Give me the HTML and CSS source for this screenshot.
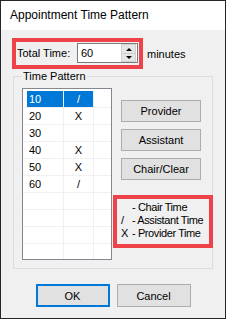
FILE: index.html
```html
<!DOCTYPE html>
<html>
<head>
<meta charset="utf-8">
<link rel="stylesheet" href="styles.css">
</head>
<body>
<div class="window">
  <div class="titlebar">Appointment Time Pattern</div>
  <div class="client">
    <div class="total-row">
      <div class="hl total">
        <span class="total-label">Total Time:</span>
        <div class="spin">
          <span class="spin-val">60</span>
          <div class="spin-btns">
            <div class="spin-up"><i class="arr-up"></i></div>
            <div class="spin-down"><i class="arr-down"></i></div>
          </div>
        </div>
      </div>
      <span class="unit">minutes</span>
    </div>
    <fieldset class="group">
      <legend>Time Pattern</legend>
      <div class="group-body">
        <div class="listview">
          <div class="row sel"><div class="cell c1"><span>10</span></div><div class="cell c2">/</div><div class="cell c3"></div></div>
          <div class="row"><div class="cell c1"><span>20</span></div><div class="cell c2">X</div><div class="cell c3"></div></div>
          <div class="row"><div class="cell c1"><span>30</span></div><div class="cell c2"></div><div class="cell c3"></div></div>
          <div class="row"><div class="cell c1"><span>40</span></div><div class="cell c2">X</div><div class="cell c3"></div></div>
          <div class="row"><div class="cell c1"><span>50</span></div><div class="cell c2">X</div><div class="cell c3"></div></div>
          <div class="row"><div class="cell c1"><span>60</span></div><div class="cell c2">/</div><div class="cell c3"></div></div>
          <div class="row"><div class="cell c1"><span></span></div><div class="cell c2"></div><div class="cell c3"></div></div>
          <div class="row"><div class="cell c1"><span></span></div><div class="cell c2"></div><div class="cell c3"></div></div>
          <div class="row"><div class="cell c1"><span></span></div><div class="cell c2"></div><div class="cell c3"></div></div>
          <div class="row"><div class="cell c1"><span></span></div><div class="cell c2"></div><div class="cell c3"></div></div>
        </div>
        <div class="side">
          <button class="btn">Provider</button>
          <button class="btn">Assistant</button>
          <button class="btn">Chair/Clear</button>
          <div class="hl legend-box">
            <div class="lg-line"><span class="sym"></span><span>- Chair Time</span></div>
            <div class="lg-line"><span class="sym">/</span><span>- Assistant Time</span></div>
            <div class="lg-line"><span class="sym">X</span><span>- Provider Time</span></div>
          </div>
        </div>
      </div>
    </fieldset>
    <div class="actions">
      <button class="dbtn default">OK</button>
      <button class="dbtn">Cancel</button>
    </div>
  </div>
</div>
</body>
</html>
```
FILE: styles.css
```css
body {
  margin: 0;
}
.window {
  width: 226px;
  height: 319px;
  box-sizing: border-box;
  border: 1px solid #262626;
  background: #f0f0f0;
  font-family: "Liberation Sans", Arial, sans-serif;
  font-size: 11px;
  color: #000;
  display: flex;
  flex-direction: column;
  overflow: hidden;
}
.titlebar {
  flex: none;
  height: 29px;
  background: #fff;
  font-size: 12px;
  line-height: 29px;
  padding-left: 9px;
}
.client {
  padding-top: 8px;
}
.total-row {
  display: flex;
  align-items: center;
  height: 31px;
  margin-left: 11px;
}
.hl {
  border: 4px solid #f04349;
  box-sizing: border-box;
}
.total {
  display: flex;
  align-items: flex-start;
  width: 131px;
  height: 31px;
  padding: 1px 0 0 1px;
}
.total-label {
  width: 60px;
  line-height: 20px;
}
.spin {
  width: 61px;
  height: 20px;
  box-sizing: border-box;
  border: 1px solid #7a7a7a;
  background: #fff;
  display: flex;
}
.spin-val {
  flex: 1;
  padding-left: 3px;
  line-height: 18px;
}
.spin-btns {
  width: 15px;
  margin-right: 1px;
  display: flex;
  flex-direction: column;
}
.spin-up,
.spin-down {
  height: 9px;
  box-sizing: border-box;
  background: #e6e6e6;
  border: 1px solid #d0d0d0;
  display: flex;
  align-items: center;
  justify-content: center;
}
.spin-up {
  border-bottom: 0;
}
.arr-up {
  width: 0;
  height: 0;
  border-left: 3px solid transparent;
  border-right: 3px solid transparent;
  border-bottom: 3px solid #000;
}
.arr-down {
  width: 0;
  height: 0;
  border-left: 3px solid transparent;
  border-right: 3px solid transparent;
  border-top: 3px solid #000;
}
.unit {
  margin-left: 4px;
}
.group {
  margin: 1px 0 0 12px;
  width: 200px;
  min-width: 0;
  box-sizing: border-box;
  border: 1px solid #dcdcdc;
  padding: 5px 0 8px 8px;
}
.group legend {
  padding: 0 1px;
  line-height: 13px;
  font-size: 11px;
}
.group-body {
  display: flex;
}
.listview {
  flex: none;
  width: 90px;
  height: 172px;
  box-sizing: border-box;
  border: 1px solid #828790;
  background: #fff;
  padding-top: 2px;
  overflow: hidden;
}
.row {
  display: grid;
  grid-template-columns: 41px 30px 17px;
  height: 17px;
  box-sizing: border-box;
  border-bottom: 1px solid #f0f0f0;
}
.cell {
  border-right: 1px solid #f0f0f0;
  line-height: 16px;
  height: 16px;
}
.cell.c3 {
  border-right: 0;
}
.c1 span {
  display: block;
  margin-left: 4px;
  padding-left: 2px;
  height: 16px;
}
.c2 {
  text-align: center;
}
.row.sel .c1 span,
.row.sel .c2 {
  background: #0078d7;
  color: #fff;
}
.side {
  flex: 1;
  display: flex;
  flex-direction: column;
  align-items: flex-start;
  padding-top: 12px;
  gap: 7px;
}
.btn {
  width: 80px;
  height: 22px;
  margin-left: 9px;
  padding: 0;
  background: #e1e1e1;
  border: 1px solid #adadad;
  font: inherit;
  color: #000;
}
.legend-box {
  flex: none;
  margin-top: 8px;
  margin-left: 1px;
  width: 100px;
  height: 53px;
  padding: 2px 0 0 4px;
  white-space: nowrap;
  letter-spacing: -0.4px;
}
.lg-line {
  display: flex;
  line-height: 13px;
}
.sym {
  flex: none;
  width: 11px;
  letter-spacing: 0;
}
.actions {
  display: flex;
  justify-content: center;
  gap: 7px;
  margin-top: 15px;
}
.dbtn {
  width: 74px;
  height: 23px;
  padding: 0;
  background: #e1e1e1;
  border: 1px solid #adadad;
  font: inherit;
  color: #000;
}
.dbtn.default {
  border: 2px solid #0078d7;
}
```
